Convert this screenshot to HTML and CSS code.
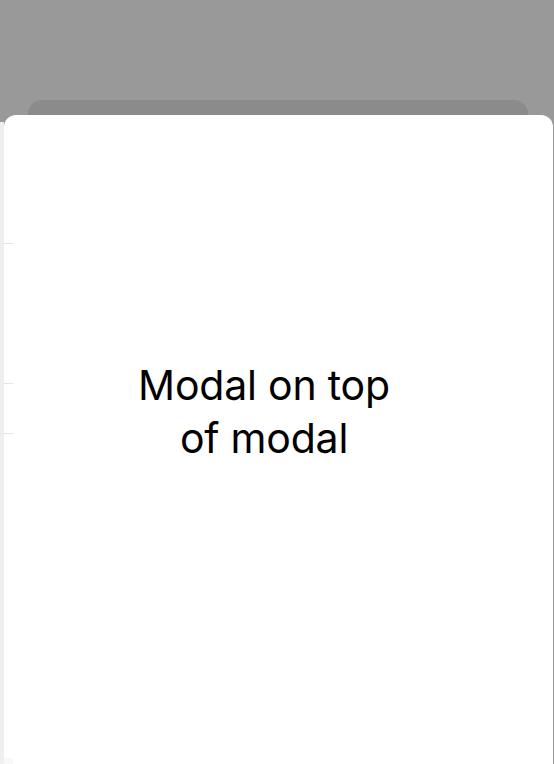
FILE: index.html
```html
<!DOCTYPE html>
<html lang="en">
<head>
<meta charset="utf-8">
<title>Modal on top of modal</title>
<link rel="stylesheet" href="styles.css">
</head>
<body>
<div class="screen">
  <div class="sheet sheet-back"></div>
  <div class="sheet sheet-front">
    <p class="message">Modal on top of modal</p>
  </div>
  <div class="under-edge">
    <span class="sep sep-1"></span>
    <span class="sep sep-2"></span>
    <span class="sep sep-3"></span>
    <span class="sep sep-4"></span>
  </div>
</div>
</body>
</html>
```
FILE: styles.css
```css
* { box-sizing: border-box; }
html, body { margin: 0; padding: 0; }
body {
  background: #999999;
  font-family: Inter, "Liberation Sans", sans-serif;
}
.screen {
  position: relative;
  width: 554px;
  height: 764px;
  overflow: hidden;
  background: #999999;
}
.under-edge {
  position: absolute;
  left: 0;
  top: 122px;
  bottom: 0;
  width: 4px;
  background: #efefef;
}
.sep {
  position: absolute;
  left: 4px;
  width: 9px;
  height: 1px;
  background: #e4e4e4;
}
.sep-1 { top: 121px; }
.sep-2 { top: 261px; }
.sep-3 { top: 311px; }
.sep-4 { top: 636px; height: 6px; background: #f8f8f8; }
.sheet {
  position: absolute;
}
.sheet-back {
  left: 28px;
  top: 100px;
  width: 500px;
  height: 40px;
  background: #8b8b8b;
  border-radius: 14px 14px 0 0;
}
.sheet-front {
  left: 4px;
  top: 115px;
  width: 549px;
  height: 680px;
  background: #ffffff;
  border-radius: 12px 12px 0 0;
  display: flex;
  justify-content: flex-start;
  padding-top: 244px;
}
.message {
  margin: 0 0 0 125px;
  width: 270px;
  text-align: center;
  font-size: 41px;
  line-height: 53px;
  color: #000000;
  letter-spacing: -0.2px;
}
```
